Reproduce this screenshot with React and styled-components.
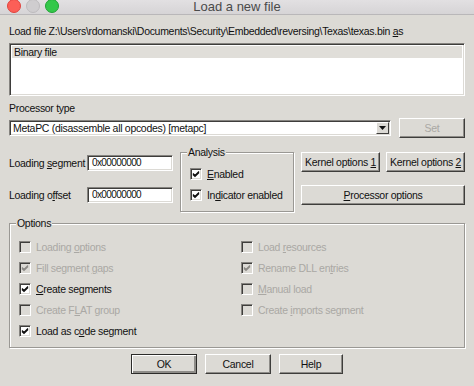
import React from "react";
import styled, { createGlobalStyle, css } from "styled-components";

const GlobalStyle = createGlobalStyle`
  html, body {
    margin: 0;
    padding: 0;
    background: #dcdad5;
  }
  body {
    font-family: "Liberation Sans", Arial, sans-serif;
    font-size: 10.5px;
    letter-spacing: -0.3px;
    color: #111;
  }
`;

const Window = styled.div`
  width: 474px;
  height: 386px;
  background: #dcdad5;
  overflow: hidden;
  display: flex;
  flex-direction: column;
`;

const TitleBar = styled.div`
  position: relative;
  height: 14px;
  flex: none;
  background: linear-gradient(#e2e0e2, #d6d4d6);
  border-bottom: 1px solid #b9b7b9;
  display: flex;
  align-items: center;
  justify-content: center;
`;

const Lights = styled.div`
  position: absolute;
  left: 7px;
  top: -1px;
  display: flex;
  gap: 5px;
`;

const Light = styled.span`
  width: 12px;
  height: 12px;
  border-radius: 50%;
  background: ${(p) => p.$color};
  border: 0.5px solid ${(p) => p.$edge};
`;

const Title = styled.span`
  font-family: "Liberation Sans", Arial, sans-serif;
  font-size: 13px;
  letter-spacing: 0;
  line-height: 14px;
  color: #4a4a4a;
`;

const Body = styled.div`
  padding: 0 9px;
  display: flex;
  flex-direction: column;
`;

const Label = styled.div`
  line-height: 14px;
  white-space: nowrap;
  margin-top: ${(p) => p.$mt || 0}px;
`;

const sunken = css`
  border-style: solid;
  border-width: 1px;
  border-color: #85837f #ffffff #ffffff #85837f;
  box-shadow: inset 1px 1px 0 #3e3d3b, inset -1px -1px 0 #dcdad5;
`;

const ListBox = styled.div`
  ${sunken};
  margin-top: 5px;
  height: 53px;
  background: #fff;
  box-sizing: border-box;
  padding: 2px 2px;
`;

const ListItem = styled.div`
  background: #e0ded9;
  line-height: 12px;
  padding-left: 2px;
`;

const ComboRow = styled.div`
  display: flex;
  align-items: center;
  gap: 8px;
  margin-top: 3px;
`;

const Combo = styled.div`
  ${sunken};
  box-sizing: border-box;
  width: 382px;
  height: 16px;
  background: #fff;
  display: flex;
  align-items: center;
  padding: 0 1px 0 3px;
`;

const ComboText = styled.span`
  flex: 1;
  line-height: 12px;
`;

const DropButton = styled.span`
  width: 13px;
  height: 12px;
  box-sizing: border-box;
  background: #dcdad5;
  border: 1px solid;
  border-color: #fff #3e3d3b #3e3d3b #fff;
  display: flex;
  align-items: center;
  justify-content: center;
`;

const Button = styled.div`
  box-sizing: border-box;
  width: ${(p) => p.$w}px;
  height: 20px;
  display: flex;
  align-items: center;
  justify-content: center;
  white-space: nowrap;
  background: #dcdad5;
  border: 1px solid;
  border-color: #ffffff #3e3d3b #3e3d3b #ffffff;
  box-shadow: inset -1px -1px 0 #8e8c88;
  color: ${(p) => (p.$disabled ? "#aaa8a4" : "#111")};
  ${(p) =>
    p.$default &&
    css`
      border-color: #2c2b29;
      box-shadow: inset 1px 1px 0 #fff, inset -2px -2px 0 #8e8c88;
    `}
`;

const Middle = styled.div`
  display: flex;
  margin-top: 14px;
  height: 60px;
`;

const Fields = styled.div`
  width: 171px;
  display: flex;
  flex-direction: column;
  padding-top: 3px;
  gap: 16px;
`;

const FieldRow = styled.div`
  display: flex;
  align-items: center;
`;

const FieldLabel = styled.span`
  width: 78px;
  white-space: nowrap;
`;

const Input = styled.div`
  ${sunken};
  box-sizing: border-box;
  width: 86px;
  height: 16px;
  background: #fff;
  padding-left: 4px;
  line-height: 14px;
  font-size: 10px;
  letter-spacing: -0.6px;
`;

const Group = styled.div`
  position: relative;
  box-sizing: border-box;
  border: 1px solid #9a9894;
  box-shadow: 1px 1px 0 #fff, inset 1px 1px 0 #fff;
  width: ${(p) => p.$w}px;
  height: ${(p) => p.$h}px;
`;

const Legend = styled.span`
  position: absolute;
  left: 6px;
  top: -8px;
  padding: 0 1px;
  background: #dcdad5;
  line-height: 14px;
`;

const AnalysisList = styled.div`
  display: flex;
  flex-direction: column;
  gap: 7px;
  padding: 14px 0 0 9px;
`;

const Check = styled.div`
  display: flex;
  align-items: center;
  gap: 5px;
  height: 14px;
  white-space: nowrap;
  color: ${(p) => (p.$disabled ? "#aaa8a4" : "#111")};
`;

const Box = styled.span`
  ${sunken};
  box-sizing: border-box;
  width: 12px;
  height: 12px;
  flex: none;
  background: ${(p) => (p.$disabled ? "#dcdad5" : "#fff")};
  display: flex;
  align-items: center;
  justify-content: center;
`;

const SideButtons = styled.div`
  margin-left: 7px;
  display: flex;
  flex-direction: column;
  gap: 13px;
`;

const ButtonPair = styled.div`
  display: flex;
  gap: 6px;
`;

const OptionsGroup = styled(Group)`
  margin-top: 11px;
  display: grid;
  grid-template-columns: 222px 1fr;
  grid-auto-rows: 21px;
  align-content: start;
  padding: 16px 0 0 9px;
`;

const Footer = styled.div`
  display: flex;
  gap: 8px;
  margin-top: 6px;
  padding-left: 122px;
`;

const CheckBox = ({ checked, disabled, children }) => (
  <Check $disabled={disabled}>
    <Box $disabled={disabled}>
      {checked && (
        <svg width="8" height="8" viewBox="0 0 8 8">
          <path
            d="M1 3.5 L3 5.5 L7 1.5 M1 4.5 L3 6.5 L7 2.5"
            stroke={disabled ? "#8c8a86" : "#111"}
            strokeWidth="1.2"
            fill="none"
          />
        </svg>
      )}
    </Box>
    <span>{children}</span>
  </Check>
);

export default function App() {
  return (
    <Window>
      <GlobalStyle />
      <TitleBar>
        <Lights>
          <Light $color="#fc5f57" $edge="#e0443e" />
          <Light $color="#cfcdcf" $edge="#bdbbbd" />
          <Light $color="#34c84a" $edge="#20a235" />
        </Lights>
        <Title>Load a new file</Title>
      </TitleBar>
      <Body>
        <Label $mt={9}>
          Load file Z:\Users\rdomanski\Documents\Security\Embedded\reversing\Texas\texas.bin{" "}
          <u>a</u>s
        </Label>
        <ListBox>
          <ListItem>Binary file</ListItem>
        </ListBox>
        <Label $mt={5}>Processor type</Label>
        <ComboRow>
          <Combo>
            <ComboText>MetaPC (disassemble all opcodes) [metapc]</ComboText>
            <DropButton>
              <svg width="7" height="4" viewBox="0 0 7 4">
                <path d="M0 0 H7 L3.5 4 Z" fill="#111" />
              </svg>
            </DropButton>
          </Combo>
          <Button $w={66} $disabled>
            Set
          </Button>
        </ComboRow>
        <Middle>
          <Fields>
            <FieldRow>
              <FieldLabel>
                Loading <u>s</u>egment
              </FieldLabel>
              <Input>0x00000000</Input>
            </FieldRow>
            <FieldRow>
              <FieldLabel>
                Loading o<u>f</u>fset
              </FieldLabel>
              <Input>0x00000000</Input>
            </FieldRow>
          </Fields>
          <Group $w={114} $h={60}>
            <Legend>Analysis</Legend>
            <AnalysisList>
              <CheckBox checked>
                <u>E</u>nabled
              </CheckBox>
              <CheckBox checked>
                In<u>d</u>icator enabled
              </CheckBox>
            </AnalysisList>
          </Group>
          <SideButtons>
            <ButtonPair>
              <Button $w={79}>
                Kernel options&nbsp;<u>1</u>
              </Button>
              <Button $w={79}>
                Kernel options&nbsp;<u>2</u>
              </Button>
            </ButtonPair>
            <Button $w={164}>
              <u>P</u>rocessor options
            </Button>
          </SideButtons>
        </Middle>
        <OptionsGroup $w={456} $h={125}>
          <Legend>Options</Legend>
          <CheckBox disabled>
            Loading <u>o</u>ptions
          </CheckBox>
          <CheckBox disabled>
            Load <u>r</u>esources
          </CheckBox>
          <CheckBox disabled checked>
            Fill segment <u>g</u>aps
          </CheckBox>
          <CheckBox disabled checked>
            Rename DLL en<u>t</u>ries
          </CheckBox>
          <CheckBox checked>
            <u>C</u>reate segments
          </CheckBox>
          <CheckBox disabled>
            <u>M</u>anual load
          </CheckBox>
          <CheckBox disabled>
            Create F<u>L</u>AT group
          </CheckBox>
          <CheckBox disabled>
            Create <u>i</u>mports segment
          </CheckBox>
          <CheckBox checked>
            Load as c<u>o</u>de segment
          </CheckBox>
        </OptionsGroup>
        <Footer>
          <Button $w={66} $default>
            OK
          </Button>
          <Button $w={66}>Cancel</Button>
          <Button $w={64}>Help</Button>
        </Footer>
      </Body>
    </Window>
  );
}
